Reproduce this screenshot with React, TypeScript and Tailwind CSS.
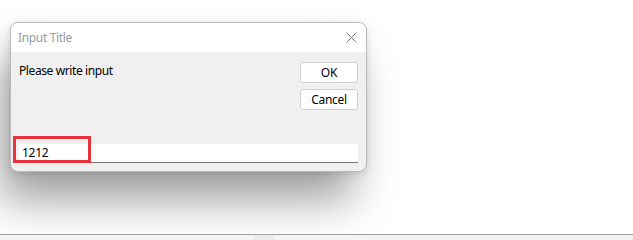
import React from "react";

export default function App() {
  const font = { fontFamily: '"Noto Sans", "Open Sans", Arial, sans-serif' };
  return (
    <div className="w-[633px] h-[240px] bg-white flex flex-col" style={font}>
      <div className="relative h-[234px] overflow-hidden bg-white">
        <div className="absolute left-[10px] top-[22px] w-[357px] h-[150px] rounded-[8px] border border-[#b9b9b9] bg-[#f0f0f0] flex flex-col overflow-hidden shadow-[-12px_30px_44px_-2px_rgba(0,0,0,0.38),0_2px_8px_rgba(0,0,0,0.12)]">
          <div className="h-[29px] bg-white flex items-center justify-between pl-[7px] pr-[9px] shrink-0">
            <span className="text-[12px] text-[#9b9b9b] leading-none tracking-[-0.35px]">Input Title</span>
            <svg width="11" height="11" viewBox="0 0 11 11">
              <path d="M0.5 0.5 L10.5 10.5 M10.5 0.5 L0.5 10.5" stroke="#7a7a7a" strokeWidth="1" fill="none" />
            </svg>
          </div>
          <div className="relative flex-1 flex flex-col px-[8px] pb-[8px]">
            <div className="flex justify-between pt-[10px]">
              <span className="text-[12px] text-black leading-[16px] pt-[1px] tracking-[-0.4px]">Please write input</span>
              <div className="flex flex-col gap-[6px]">
                <button className="w-[58px] h-[21px] bg-white border border-[#d0d0d0] rounded-[3px] text-[12px] text-black leading-none flex items-center justify-center tracking-[-0.2px]">
                  OK
                </button>
                <button className="w-[58px] h-[21px] bg-white border border-[#d0d0d0] rounded-[3px] text-[12px] text-black leading-none flex items-center justify-center tracking-[-0.3px]">
                  Cancel
                </button>
              </div>
            </div>
            <div className="mt-auto h-[19px] bg-white border-b border-[#7a7a7a] flex items-center pl-[3px]">
              <span className="text-[12px] text-black leading-none tracking-[-0.3px]">1212</span>
            </div>
            <div className="absolute left-[2px] top-[84px] w-[78px] h-[27px] border-[3px] border-[#e8323c]" />
          </div>
        </div>
      </div>
      <div className="h-px bg-[#a0a0a0]" />
      <div className="flex-1 bg-[#f3f3f3] flex">
        <div className="w-[253px]" />
        <div className="w-[22px] bg-[#ebebeb]" />
      </div>
    </div>
  );
}
